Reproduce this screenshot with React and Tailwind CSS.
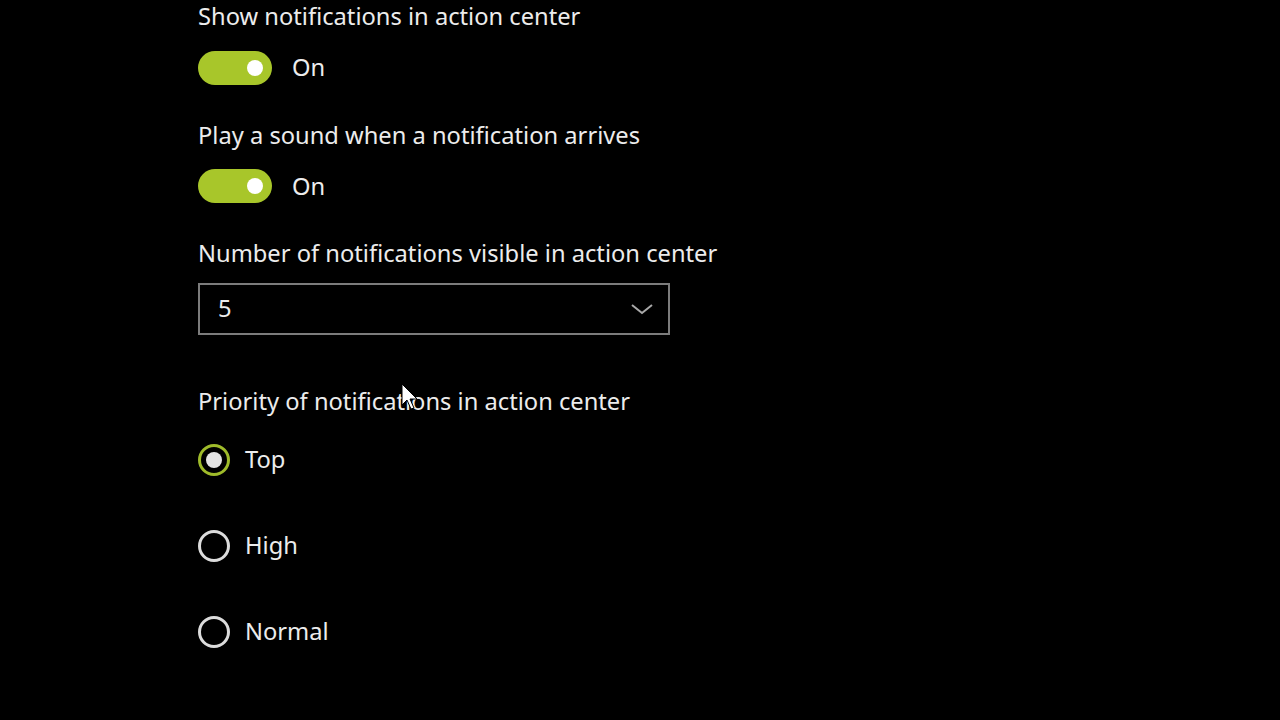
import React, { useState } from 'react';

function Toggle({ on }) {
  return (
    <div className="flex items-center gap-5">
      <div className="relative w-[74px] h-[34px] rounded-full bg-[#a8c62a]">
        <div className="absolute right-[9px] top-[9px] w-4 h-4 rounded-full bg-white" />
      </div>
      <span className="text-[23.7px] text-[#ececec]">{on ? 'On' : 'Off'}</span>
    </div>
  );
}

function Radio({ label, checked }) {
  return (
    <div className="flex items-center gap-[15px] h-[34px]">
      <div
        className={`w-8 h-8 rounded-full border-[3px] flex items-center justify-center ${
          checked ? 'border-[#9fbb2a]' : 'border-[#dcdcdc]'
        }`}
      >
        {checked && <div className="w-4 h-4 rounded-full bg-[#e4e4e4]" />}
      </div>
      <span className="text-[23.7px] text-[#ececec]">{label}</span>
    </div>
  );
}

export default function App() {
  const [priority] = useState('Top');

  return (
    <div
      className="relative w-[1280px] h-[720px] bg-black overflow-hidden text-[#ececec]"
      style={{ fontFamily: '"Noto Sans", "Open Sans", sans-serif' }}
    >
      <div className="pl-[198px] pt-[1px] flex flex-col">
        <div className="text-[23.7px] leading-[30px]">Show notifications in action center</div>
        <div className="mt-[19px]">
          <Toggle on />
        </div>

        <div className="mt-[34px] text-[23.7px] leading-[30px]">Play a sound when a notification arrives</div>
        <div className="mt-[19px]">
          <Toggle on />
        </div>

        <div className="mt-[34px] text-[23.7px] leading-[30px]">Number of notifications visible in action center</div>
        <div className="mt-[15px] w-[472px] h-[52px] border-2 border-[#7c7c7c] flex items-center justify-between pl-[18px] pr-[14px]">
          <span className="text-[23.7px]">5</span>
          <svg width="24" height="14" viewBox="0 0 24 14" fill="none" stroke="#a8a8a8" strokeWidth="2">
            <path d="M2 3 L12 11 L22 3" />
          </svg>
        </div>

        <div className="mt-[51px] text-[23.7px] leading-[30px]">Priority of notifications in action center</div>
        <div className="mt-[27px] flex flex-col gap-[52px]">
          {['Top', 'High', 'Normal'].map((p) => (
            <Radio key={p} label={p} checked={priority === p} />
          ))}
        </div>
      </div>

      <svg
        className="absolute left-[401px] top-[383px]"
        width="18"
        height="28"
        viewBox="0 0 18 28"
      >
        <path d="M1 1 L1 22 L6 17 L10 26 L13 25 L9 16 L16 16 Z" fill="#fff" stroke="#000" strokeWidth="1" />
      </svg>
    </div>
  );
}
